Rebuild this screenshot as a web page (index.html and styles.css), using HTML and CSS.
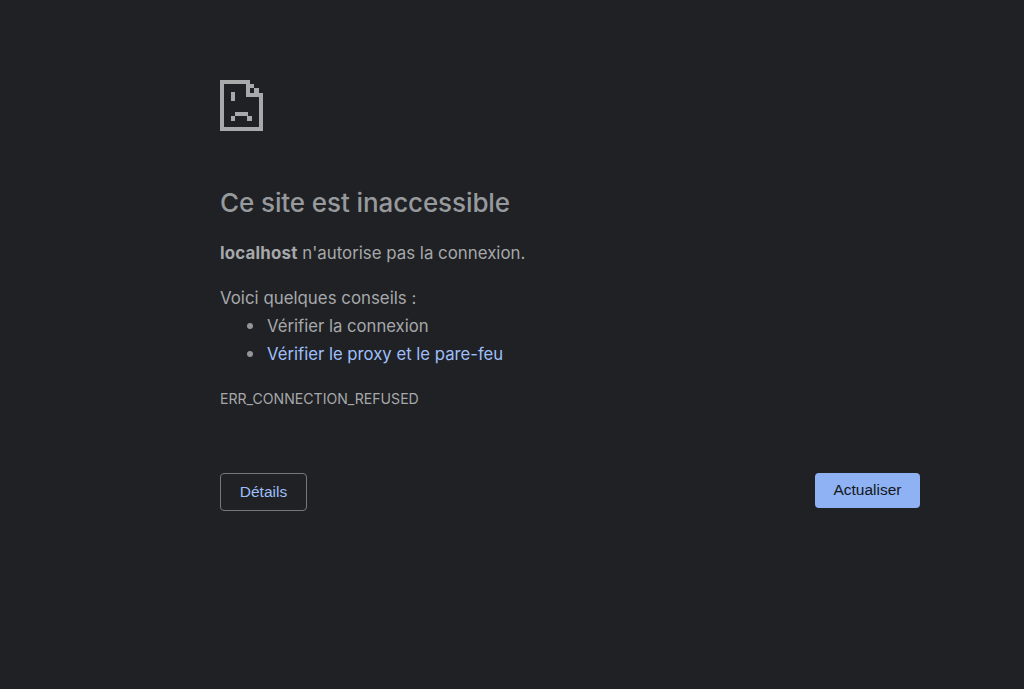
FILE: index.html
```html
<!DOCTYPE html>
<html lang="fr">
<head>
    <meta charset="UTF-8">
    <title>localhost</title>
    <link rel="stylesheet" href="styles.css">
</head>
<body>
    <div class="wrapper">
        <svg class="icon" width="43" height="51" viewBox="0 0 43 51" aria-hidden="true">
            <g fill="#a8a9aa">
                <!-- page outline -->
                <rect x="0" y="0" width="30" height="4"/>
                <rect x="0" y="0" width="4" height="51"/>
                <rect x="0" y="47" width="43" height="4"/>
                <rect x="39" y="13" width="4" height="38"/>
                <!-- folded corner -->
                <rect x="26" y="0" width="4" height="17"/>
                <rect x="26" y="13" width="17" height="4"/>
                <rect x="30" y="4" width="4" height="4"/>
                <rect x="34" y="8" width="5" height="5"/>
                <!-- face -->
                <rect x="11" y="12" width="4" height="9"/>
                <rect x="15" y="32" width="13" height="4"/>
                <rect x="11" y="36" width="4" height="5"/>
                <rect x="27" y="36" width="5" height="5"/>
            </g>
        </svg>
        <h1>Ce site est inaccessible</h1>
        <p class="summary"><strong>localhost</strong> n'autorise pas la connexion.</p>
        <div class="tips">
            <p>Voici quelques conseils :</p>
            <ul>
                <li>Vérifier la connexion</li>
                <li><a href="#">Vérifier le proxy et le pare-feu</a></li>
            </ul>
        </div>
        <div class="error-code">ERR_CONNECTION_REFUSED</div>
        <div class="buttons">
            <button class="details" type="button">Détails</button>
            <button class="reload" type="button">Actualiser</button>
        </div>
    </div>
</body>
</html>
```

FILE: styles.css
```css
body {
    margin: 0;
    background-color: #202124;
    color: #a6a8ab;
    font-family: Inter, "Liberation Sans", sans-serif;
    font-size: 16.85px;
}
.wrapper {
    width: 700px;
    margin-left: 220px;
    padding-top: 80px;
}
.icon {
    display: block;
}
h1 {
    margin: 55px 0 0;
    font-size: 26px;
    font-weight: 500;
    letter-spacing: -0.1px;
    line-height: 34px;
    color: #979a9d;
}
.summary {
    margin: 19px 0 0;
    line-height: 28px;
}
.summary strong {
    font-weight: 700;
    letter-spacing: 0.2px;
}
.tips {
    margin-top: 17px;
    line-height: 28px;
}
.tips p {
    margin: 0;
}
ul {
    margin: 0;
    padding-left: 27px;
    font-size: 16.7px;
    list-style: none;
}
li {
    display: flex;
    align-items: center;
}
li::before {
    content: "";
    width: 6px;
    height: 6px;
    margin-right: 14px;
    border-radius: 50%;
    background-color: #939699;
}
a {
    color: #9ebffa;
    text-decoration: none;
}
.error-code {
    margin-top: 22px;
    font-size: 14.1px;
    line-height: 18px;
}
.buttons {
    display: flex;
    justify-content: space-between;
    align-items: flex-start;
    margin-top: 65px;
}
button {
    font-family: "Liberation Sans", Arial, sans-serif;
    font-size: 15.5px;
    border-radius: 4px;
    cursor: pointer;
}
.details {
    width: 87px;
    height: 38px;
    padding-bottom: 2px;
    background: transparent;
    border: 1px solid #75787c;
    color: #9ebffa;
}
.reload {
    width: 105px;
    height: 35px;
    padding-bottom: 2px;
    background: #8fb2f5;
    border: none;
    color: #14161a;
}
```
